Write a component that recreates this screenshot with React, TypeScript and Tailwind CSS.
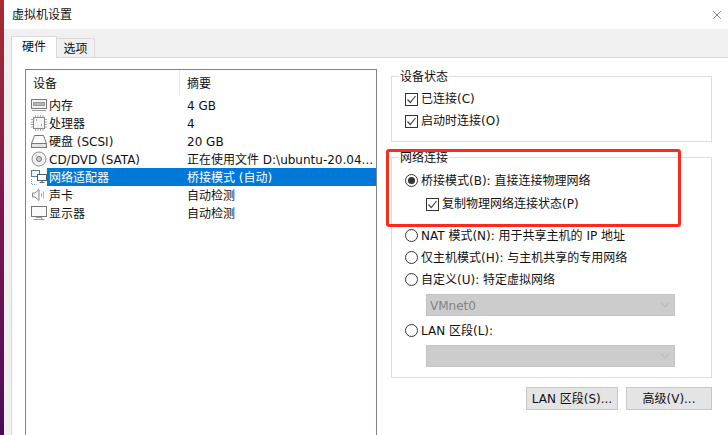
import { X, ChevronDown } from 'lucide-react';
import type { ReactNode } from 'react';

const Memory = () => (
  <svg width="16" height="16" viewBox="0 0 16 16" fill="none" stroke="#7a7a7a">
    <rect x="0.5" y="2.5" width="15" height="9" fill="#f2f2f2" />
    <rect x="2.5" y="5.5" width="11" height="3" fill="#b5b5b5" stroke="#9a9a9a" />
    <path d="M1 13.5h14" stroke="#9a9a9a" />
  </svg>
);

const Cpu = () => (
  <svg width="16" height="16" viewBox="0 0 16 16" fill="none" stroke="#8a8a8a">
    <rect x="2.5" y="2.5" width="11" height="11" fill="#f4f4f4" />
    <path d="M4.5 0v2M7 0v2M9.5 0v2M12 0v2M4.5 14v2M7 14v2M9.5 14v2M12 14v2M0 4.5h2M0 7h2M0 9.5h2M0 12h2M14 4.5h2M14 7h2M14 9.5h2M14 12h2" stroke="#a8a8a8" />
    <path d="M5 5h1M10 10h1" stroke="#555" />
  </svg>
);

const Disk = () => (
  <svg width="16" height="16" viewBox="0 0 16 16" fill="none" stroke="#777">
    <path d="M3.5 2.5h9l3 8h-15z" fill="#fafafa" />
    <rect x="0.5" y="10.5" width="15" height="4" fill="#e4e4e4" />
  </svg>
);

const Disc = () => (
  <svg width="16" height="16" viewBox="0 0 16 16" fill="none" stroke="#8a8a8a">
    <circle cx="8" cy="8" r="7" fill="#f2f2f2" />
    <circle cx="8" cy="8" r="2.5" fill="#cfcfcf" stroke="#777" />
    <path d="M4 6a4.5 4.5 0 0 1 2-2" stroke="#c0c0c0" />
  </svg>
);

const Network = () => (
  <svg width="16" height="16" viewBox="0 0 16 16" fill="none" stroke="#5c7f9e">
    <rect x="0.5" y="1.5" width="8" height="6" fill="#eef5fb" />
    <rect x="6.5" y="5.5" width="9" height="6" fill="#fff" stroke="#4a5f73" />
    <path d="M11 11.5v2M8.5 13.5h5" stroke="#4a5f73" />
    <path d="M0.5 10v5.5h5" stroke="#6aa5d8" strokeDasharray="1 1" />
  </svg>
);

const Speaker = () => (
  <svg width="16" height="16" viewBox="0 0 16 16" fill="none" stroke="#8a8a8a">
    <path d="M1.5 6v4h2.5l4 3.5v-11l-4 3.5z" fill="#f6f6f6" />
    <path d="M10.5 6v4M12.5 4.5v7" stroke="#b0b0b0" />
  </svg>
);

const Monitor = () => (
  <svg width="16" height="16" viewBox="0 0 16 16" fill="none" stroke="#777">
    <rect x="0.5" y="1.5" width="15" height="10" fill="#fafafa" />
    <path d="M5 12.5h6v1.5M2.5 14.5h11" stroke="#9a9a9a" />
  </svg>
);

const devices = [
  { icon: <Memory />, name: '内存', summary: '4 GB' },
  { icon: <Cpu />, name: '处理器', summary: '4' },
  { icon: <Disk />, name: '硬盘 (SCSI)', summary: '20 GB' },
  { icon: <Disc />, name: 'CD/DVD (SATA)', summary: '正在使用文件 D:\\ubuntu-20.04...' },
  { icon: <Network />, name: '网络适配器', summary: '桥接模式 (自动)', selected: true },
  { icon: <Speaker />, name: '声卡', summary: '自动检测' },
  { icon: <Monitor />, name: '显示器', summary: '自动检测' },
];

function Check({ children }: { children: ReactNode }) {
  return (
    <div className="flex h-[22px] items-center">
      <span className="mr-[3px] flex h-[13px] w-[13px] items-center justify-center border border-[#333]">
        <svg width="11" height="11" viewBox="0 0 11 11" fill="none" stroke="#444" strokeWidth="1.2">
          <path d="M1.5 5.5l2.8 3 5.2-6.5" />
        </svg>
      </span>
      <span>{children}</span>
    </div>
  );
}

function Radio({ on, children }: { on?: boolean; children: ReactNode }) {
  return (
    <div className="flex h-[22px] items-center">
      <span className="mr-[3px] flex h-[13px] w-[13px] items-center justify-center rounded-full border border-[#333]">
        {on && <span className="h-[7px] w-[7px] rounded-full bg-[#333]" />}
      </span>
      <span className="translate-y-px">{children}</span>
    </div>
  );
}

function Select({ value }: { value?: string }) {
  return (
    <div className="ml-[21px] flex h-[22px] w-[249px] items-center justify-between border border-[#c4c4c4] bg-[#cccccc] pl-[3px] pr-[2px] text-[#838383]">
      <span className="translate-y-px">{value}</span>
      <ChevronDown className="h-[14px] w-[14px] text-[#a6a6a6]" strokeWidth={1.2} />
    </div>
  );
}

export default function App() {
  return (
    <div className="relative flex h-[435px] w-[728px] overflow-hidden bg-white text-[12px] leading-[16px] text-[#111] font-['DejaVu_Sans','Noto_Sans_CJK_SC',sans-serif]">
      {/* 배경 */}
      <div className="w-[4px] shrink-0 bg-gradient-to-b from-[#a82c30] via-[#7a1450] to-[#4a0a58]" />

      <div className="flex min-w-0 flex-1 flex-col">
        <div className="flex h-[29px] shrink-0 items-center justify-between pl-[8px] pr-[4px]">
          <span>虚拟机设置</span>
          <X className="h-[14px] w-[14px] text-[#222]" strokeWidth={1} />
        </div>

        <div className="flex min-h-0 flex-1 flex-col bg-[#f0f0f0] pl-[7px] pt-[7px]">
          <div className="flex h-[21px] shrink-0 items-end">
            <div className="z-10 -mb-px flex h-[22px] w-[46px] items-center justify-center border border-b-0 border-[#d9d9d9] bg-white pb-[1px]">
              硬件
            </div>
            <div className="flex h-[19px] w-[38px] items-center justify-center border border-b-0 border-l-0 border-[#d9d9d9] pt-[1px]">
              选项
            </div>
          </div>

          <div className="flex min-h-0 flex-1 border-l border-t border-[#d9d9d9] bg-white pl-[13px] pt-[11px]">
            <div className="w-[352px] shrink-0 border-l border-t border-r border-[#82828c]">
              <div className="flex h-[26px]">
                <div className="flex w-[154px] items-center border-r border-[#e5e5e5] pl-[7px]">
                  <span className="translate-y-px">设备</span>
                </div>
                <div className="flex items-center pl-[7px]">
                  <span className="translate-y-px">摘要</span>
                </div>
              </div>
              {devices.map((d) => (
                <div key={d.name} className="flex h-[18px] items-center">
                  <div className="flex w-[21px] shrink-0 justify-end">{d.icon}</div>
                  <div className={`flex h-full flex-1 items-center ${d.selected ? 'bg-[#0078d7] text-white' : ''}`}>
                    <div className="w-[140px] shrink-0 translate-y-px pl-[2px]">{d.name}</div>
                    <div className="translate-y-px">{d.summary}</div>
                  </div>
                </div>
              ))}
            </div>

            <div className="ml-[14px] w-[321px] shrink-0">
              <fieldset className="border border-[#dcdcdc] pb-[9px] pl-[13px] pt-[5px]">
                <legend className="-ml-[6px] px-[1px] leading-[14px]">
                  <span className="block translate-y-px">设备状态</span>
                </legend>
                <Check>已连接(C)</Check>
                <Check>启动时连接(O)</Check>
              </fieldset>

              <fieldset className="mt-[8px] border border-[#dcdcdc] pb-[10px] pl-[13px] pt-[5px]">
                <legend className="-ml-[6px] px-[1px] leading-[14px]">
                  <span className="block translate-y-px">网络连接</span>
                </legend>
                <Radio on>桥接模式(B): 直接连接物理网络</Radio>
                <div className="ml-[21px] mt-[2px]">
                  <Check>复制物理网络连接状态(P)</Check>
                </div>
                <div className="mt-[9px]">
                  <Radio>NAT 模式(N): 用于共享主机的 IP 地址</Radio>
                  <Radio>仅主机模式(H): 与主机共享的专用网络</Radio>
                  <Radio>自定义(U): 特定虚拟网络</Radio>
                </div>
                <div className="mt-[4px]">
                  <Select value="VMnet0" />
                </div>
                <div className="mt-[3px]">
                  <Radio>LAN 区段(L):</Radio>
                </div>
                <div className="mt-[4px]">
                  <Select />
                </div>
              </fieldset>

              <div className="mt-[9px] flex justify-end gap-[8px]">
                <button className="h-[23px] w-[92px] border border-[#c8c8c8] bg-[#e4e4e4]">LAN 区段(S)...</button>
                <button className="h-[23px] w-[86px] border border-[#c8c8c8] bg-[#e4e4e4]">高级(V)...</button>
              </div>
            </div>
          </div>
        </div>
      </div>

      {/* 빨간 표시 */}
      <div className="absolute left-[386px] top-[149px] h-[78px] w-[295px] rounded-[3px] border-[3px] border-[#ff2a1a]" />
    </div>
  );
}
